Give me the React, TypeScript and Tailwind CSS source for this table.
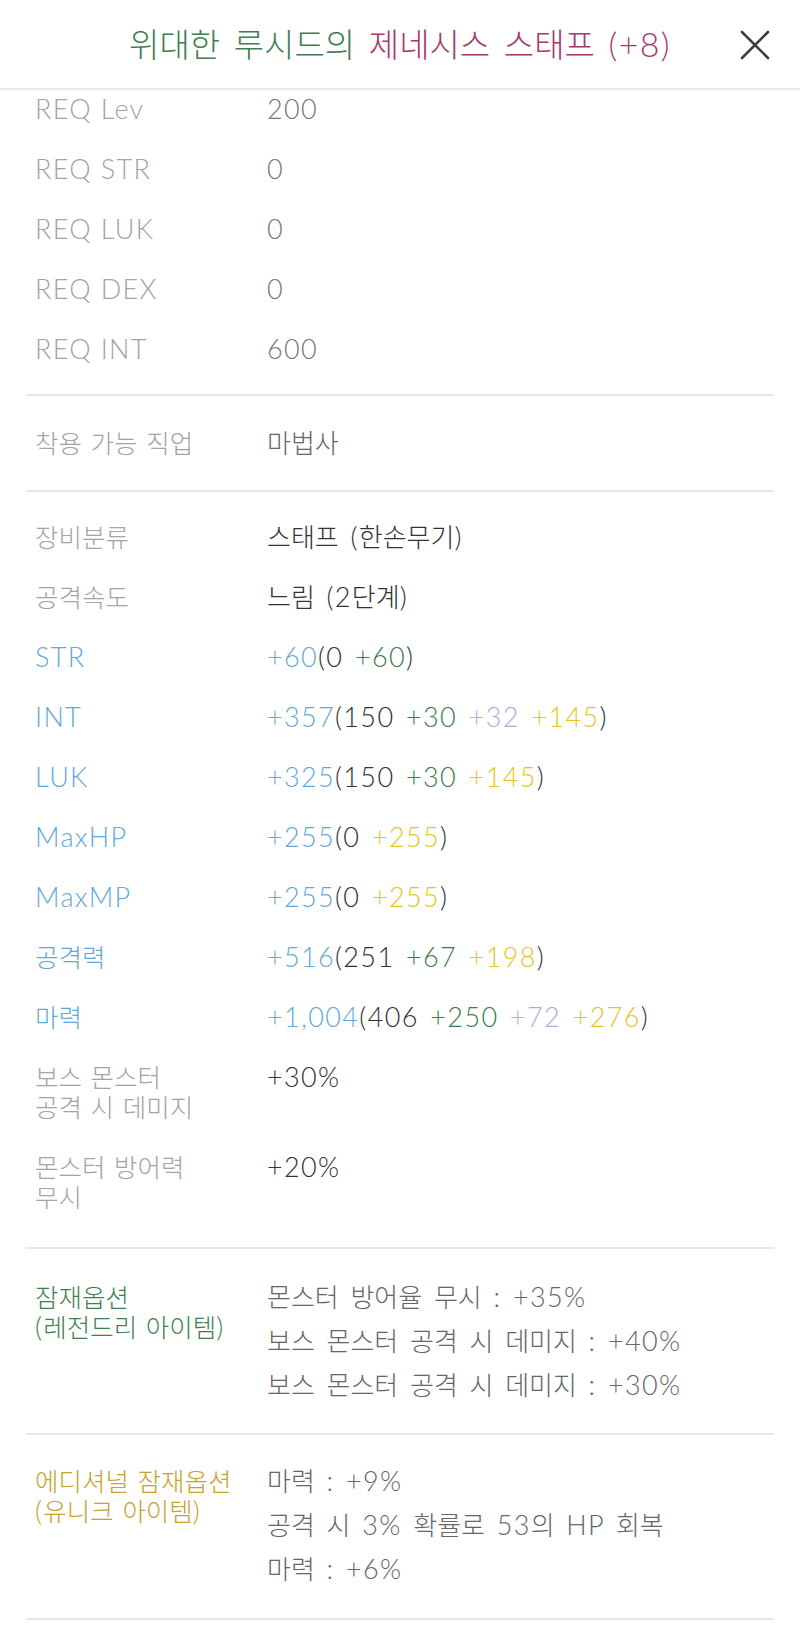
import React from "react";

const HANGUL = /([\uAC00-\uD7A3]+)/;

const LABEL_LATIN = "text-[27px] tracking-[0.05em]";
const VALUE_LATIN = "text-[27px] tracking-[0.05em]";

// latin runs are set a touch larger and tracked so they come out like the reference font
function T({ s, latin = VALUE_LATIN }: { s: string; latin?: string }) {
    return (
        <>
            {s.split(HANGUL).map((p, i) => {
                if (p === "") return null;
                if (HANGUL.test(p)) return <span key={i}>{p}</span>;
                return (
                    <span key={i} className={latin}>
                        {p}
                    </span>
                );
            })}
        </>
    );
}

const BLUE = "text-[#62a9d9]";
const DARK = "text-[#333333]";
const GREEN = "text-[#3b7b4b]";
const PURPLE = "text-[#b1a9e2]";
const YELLOW = "text-[#e6c41c]";
const GRAY = "text-[#a3a3a3]";

type Part = [string, string];

interface Row {
    label: string[];
    labelColor: string;
    parts: Part[];
}

const reqRows: Row[] = [
    { label: ["REQ Lev"], labelColor: GRAY, parts: [["200", "text-[#777777]"]] },
    { label: ["REQ STR"], labelColor: GRAY, parts: [["0", "text-[#777777]"]] },
    { label: ["REQ LUK"], labelColor: GRAY, parts: [["0", "text-[#777777]"]] },
    { label: ["REQ DEX"], labelColor: GRAY, parts: [["0", "text-[#777777]"]] },
    { label: ["REQ INT"], labelColor: GRAY, parts: [["600", "text-[#777777]"]] },
];

const statRows: Row[] = [
    { label: ["장비분류"], labelColor: GRAY, parts: [["스태프 (한손무기)", DARK]] },
    { label: ["공격속도"], labelColor: GRAY, parts: [["느림 (2단계)", DARK]] },
    {
        label: ["STR"],
        labelColor: BLUE,
        parts: [["+60", BLUE], ["(0 ", DARK], ["+60", GREEN], [")", DARK]],
    },
    {
        label: ["INT"],
        labelColor: BLUE,
        parts: [
            ["+357", BLUE],
            ["(150 ", DARK],
            ["+30 ", GREEN],
            ["+32 ", PURPLE],
            ["+145", YELLOW],
            [")", DARK],
        ],
    },
    {
        label: ["LUK"],
        labelColor: BLUE,
        parts: [["+325", BLUE], ["(150 ", DARK], ["+30 ", GREEN], ["+145", YELLOW], [")", DARK]],
    },
    {
        label: ["MaxHP"],
        labelColor: BLUE,
        parts: [["+255", BLUE], ["(0 ", DARK], ["+255", YELLOW], [")", DARK]],
    },
    {
        label: ["MaxMP"],
        labelColor: BLUE,
        parts: [["+255", BLUE], ["(0 ", DARK], ["+255", YELLOW], [")", DARK]],
    },
    {
        label: ["공격력"],
        labelColor: BLUE,
        parts: [["+516", BLUE], ["(251 ", DARK], ["+67 ", GREEN], ["+198", YELLOW], [")", DARK]],
    },
    {
        label: ["마력"],
        labelColor: BLUE,
        parts: [
            ["+1,004", BLUE],
            ["(406 ", DARK],
            ["+250 ", GREEN],
            ["+72 ", PURPLE],
            ["+276", YELLOW],
            [")", DARK],
        ],
    },
    { label: ["보스 몬스터", "공격 시 데미지"], labelColor: GRAY, parts: [["+30%", DARK]] },
    { label: ["몬스터 방어력", "무시"], labelColor: GRAY, parts: [["+20%", DARK]] },
];

function InfoRow({ row }: { row: Row }) {
    return (
        <div className="flex leading-[30px]">
            <div className={`w-[232px] shrink-0 text-[25.5px] ${row.labelColor}`}>
                {row.label.map((l, i) => (
                    <div key={i} className="h-[30px] whitespace-nowrap">
                        <T s={l} latin={LABEL_LATIN} />
                    </div>
                ))}
            </div>
            <div className="h-[30px] whitespace-pre text-[26px] [word-spacing:3px]">
                {row.parts.map(([text, color], i) => (
                    <span key={i} className={color}>
                        <T s={text} />
                    </span>
                ))}
            </div>
        </div>
    );
}

function OptionBlock({
    title,
    color,
    lines,
    className,
}: {
    title: string[];
    color: string;
    lines: string[];
    className: string;
}) {
    return (
        <section className={`border-b-2 border-[#e8e8e8] pl-[9px] flex ${className}`}>
            <div className={`w-[232px] shrink-0 mt-[7px] leading-[30px] text-[25.5px] ${color}`}>
                {title.map((t, i) => (
                    <div key={i} className="h-[30px] whitespace-nowrap">
                        <T s={t} latin={LABEL_LATIN} />
                    </div>
                ))}
            </div>
            <div className="flex flex-col leading-[44px] text-[26px] [word-spacing:3px] text-[#666666]">
                {lines.map((l, i) => (
                    <div key={i} className="h-[44px] whitespace-nowrap">
                        <T s={l} />
                    </div>
                ))}
            </div>
        </section>
    );
}

export default function App() {
    return (
        <div className="w-[800px] h-[1626px] overflow-hidden bg-white font-['Lato','Noto_Sans_CJK_KR',sans-serif] font-light">
            {/* header */}
            <header className="relative h-[90px] border-b-2 border-[#e8e8e8] flex items-center justify-center">
                <h1 className="h-[34px] leading-[34px] text-[33px] font-light [word-spacing:3px]">
                    <span className="text-[#3f7d52]">
                        <T s="위대한 루시드의 " latin="text-[34px] tracking-[0.04em]" />
                    </span>
                    <span className="text-[#a8396f]">
                        <T s="제네시스 스태프 (+8)" latin="text-[34px] tracking-[0.04em]" />
                    </span>
                </h1>
                <button className="absolute right-[30px] top-[30px] w-[30px] h-[30px]">
                    <svg viewBox="0 0 30 30" className="w-[30px] h-[30px]">
                        <path
                            d="M2 2 L28 28 M28 2 L2 28"
                            stroke="#3d3d3d"
                            strokeWidth="2.6"
                            strokeLinecap="round"
                            fill="none"
                        />
                    </svg>
                </button>
            </header>

            <main className="px-[26px]">
                <section className="border-b-2 border-[#e8e8e8] pt-[4px] pb-[30px] pl-[9px] flex flex-col gap-[30px]">
                    {reqRows.map((r, i) => (
                        <InfoRow key={i} row={r} />
                    ))}
                </section>

                <section className="border-b-2 border-[#e8e8e8] py-[32px] pl-[9px] flex flex-col">
                    <InfoRow
                        row={{ label: ["착용 가능 직업"], labelColor: GRAY, parts: [["마법사", "text-[#666666]"]] }}
                    />
                </section>

                <section className="border-b-2 border-[#e8e8e8] pt-[30px] pb-[35px] pl-[9px] flex flex-col gap-[30px]">
                    {statRows.map((r, i) => (
                        <InfoRow key={i} row={r} />
                    ))}
                </section>

                <OptionBlock
                    className="pt-[26px] pb-[26px]"
                    title={["잠재옵션", "(레전드리 아이템)"]}
                    color="text-[#3e7f52]"
                    lines={[
                        "몬스터 방어율 무시 : +35%",
                        "보스 몬스터 공격 시 데미지 : +40%",
                        "보스 몬스터 공격 시 데미지 : +30%",
                    ]}
                />

                <OptionBlock
                    className="pt-[24px] pb-[27px]"
                    title={["에디셔널 잠재옵션", "(유니크 아이템)"]}
                    color="text-[#c9a12c]"
                    lines={["마력 : +9%", "공격 시 3% 확률로 53의 HP 회복", "마력 : +6%"]}
                />
            </main>
        </div>
    );
}
